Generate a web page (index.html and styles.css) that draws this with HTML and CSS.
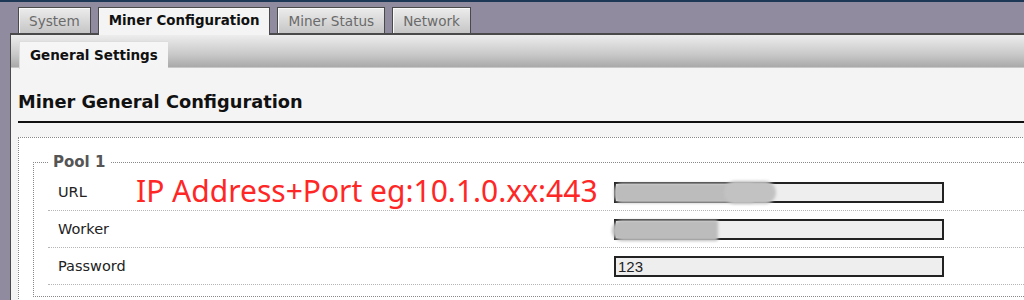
FILE: index.html
```html
<!DOCTYPE html>
<html>
<head>
<meta charset="utf-8">
<link rel="stylesheet" href="styles.css">
</head>
<body>
<div class="topline"></div>
<ul class="tabs">
  <li class="tab">System</li>
  <li class="tab active">Miner Configuration</li>
  <li class="tab">Miner Status</li>
  <li class="tab">Network</li>
</ul>
<div class="main">
  <div class="subnav">
    <div class="subtab">General Settings</div>
  </div>
  <div class="content">
    <h2 class="title">Miner General Configuration</h2>
    <div class="outer">
      <div class="pool">
        <div class="legend">Pool 1</div>
        <div class="row">
          <label class="lbl">URL</label>
          <div class="field"><div class="input"></div><div class="blur b1"></div><div class="blur b1b"></div></div>
        </div>
        <div class="row">
          <label class="lbl">Worker</label>
          <div class="field"><div class="input"></div><div class="blur b2"></div></div>
        </div>
        <div class="row">
          <label class="lbl">Password</label>
          <div class="field"><div class="input">123</div></div>
        </div>
        <div class="note">IP Address+Port eg:10.1.0.xx:443</div>
      </div>
    </div>
  </div>
</div>
</body>
</html>
```
FILE: styles.css
```css
html, body { margin: 0; padding: 0; }
body {
  background: #908b9e;
  font-family: "DejaVu Sans", Verdana, sans-serif;
  width: 1024px;
  height: 300px;
  overflow: hidden;
}
.topline { height: 2px; background: #1c3856; }
.tabs {
  list-style: none;
  margin: 5px 0 0 0;
  padding: 0 0 0 18px;
  display: flex;
  gap: 7px;
  height: 26px;
  position: relative;
  z-index: 2;
}
.tab {
  box-sizing: border-box;
  height: 26px;
  padding: 0 10px;
  border: 1px solid #4a4a4a;
  border-bottom: none;
  background: linear-gradient(#ececec, #c6c6c6);
  box-shadow: inset 1px 1px 0 #fafafa;
  color: #6a6a6a;
  font-size: 13.6px;
  line-height: 26px;
}
.tab.active {
  background: #f4f4f4;
  color: #111;
  font-weight: bold;
  height: 28px;
  padding: 0 10px;
  font-size: 13.4px;
}
.main {
  margin-left: 10px;
  border-left: 1px solid #4a4a4a;
  border-top: 2px solid #4a4a4a;
  background: #f4f4f4;
  width: 1200px;
  height: 300px;
  overflow: hidden;
}
.subnav {
  height: 33px;
  background: linear-gradient(#ededed, #c9c9c9 60%, #a9a9a9);
  border-bottom: 1px solid #c8c8c8;
  box-sizing: border-box;
  padding: 6px 0 0 8px;
  display: flex;
}
.subtab {
  background: linear-gradient(#f6f6f6, #f4f4f4);
  border-top: 1px solid #ddd;
  border-left: 1px solid #ddd;
  padding: 0 10px;
  font-weight: bold;
  font-size: 13.5px;
  color: #111;
  line-height: 26px;
  height: 27px;
}
.content { padding: 0 0 0 7px; }
.title {
  margin: 0;
  padding: 20px 0 0 0;
  height: 33px;
  font-size: 17.8px;
  font-weight: bold;
  color: #111;
  border-bottom: 2px solid #111;
  line-height: 28px;
}
.outer {
  margin-top: 14px;
  border: 1px dotted #888;
  background: #fff;
  padding: 24px 0 0 14px;
  height: 200px;
}
.pool {
  position: relative;
  border: 1px dotted #888;
  border-right: none;
  padding: 11px 0 0 14px;
  height: 122px;
}
.legend {
  position: absolute;
  top: -10px;
  left: 14px;
  background: #fff;
  padding: 0 5px;
  font-weight: bold;
  font-size: 15px;
  color: #555;
  line-height: 18px;
}
.row {
  display: flex;
  align-items: center;
  height: 36px;
  border-bottom: 1px dotted #b5b5b5;
  padding-left: 10px;
}
.lbl {
  width: 556px;
  font-size: 14.5px;
  color: #222;
}
.field { position: relative; }
.input {
  box-sizing: border-box;
  width: 330px;
  height: 21px;
  border: 2px solid #222;
  background: #eeeeee;
  font-family: "Liberation Sans", Arial, sans-serif;
  font-size: 15px;
  line-height: 17px;
  padding-left: 2px;
  color: #222;
}
.blur {
  position: absolute;
  background: #bcbcbc;
  border-radius: 12px;
  filter: blur(1.5px);
}
.b1 { left: 0; top: 1px; width: 140px; height: 20px; border-radius: 8px 4px 4px 8px; }
.b1b { left: 110px; top: -1px; width: 52px; height: 23px; background: #c2c2c2; }
.b2 { left: -2px; top: 1px; width: 106px; height: 21px; border-radius: 10px 2px 2px 10px; }
.note {
  position: absolute;
  left: 102px;
  top: 10px;
  color: #ff2626;
  font-family: "Noto Sans", "Open Sans", sans-serif;
  font-size: 30px;
  line-height: 36px;
  white-space: nowrap;
}
```
